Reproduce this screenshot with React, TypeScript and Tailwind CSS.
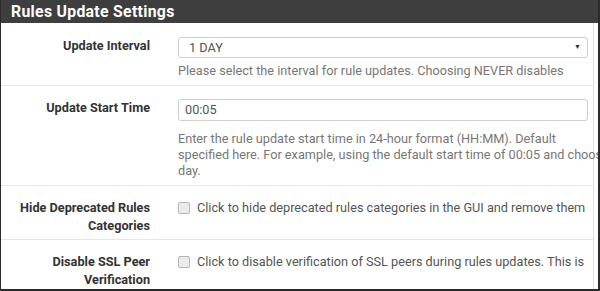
export default function App() {
  return (
    <div
      className="w-[600px] h-[291px] overflow-hidden bg-white border-l border-r-2 border-b-2 border-[#2b2b2b]"
      style={{ fontFamily: 'Roboto, "Liberation Sans", sans-serif' }}
    >
      <div className="h-[23px] bg-[#3e3e3e] pl-[10px] flex items-center">
        <span className="text-white text-[15.8px] font-bold tracking-[0.3px]">Rules Update Settings</span>
      </div>
      <div className="mr-[4px] border-r border-[#e3e3e3]">
        {/* Update Interval */}
        <div className="flex border-b border-[#e6e6e6] h-[63px]">
          <div className="w-[149px] shrink-0 text-right pt-[15px] text-[12.7px] font-bold text-[#333] leading-[16px]">
            Update Interval
          </div>
          <div className="flex-1 ml-[28px] pr-[5px] pt-[14px] min-w-0">
            <div className="h-[21px] border border-[#cfcfcf] rounded-[3px] flex items-center justify-between pl-[10px] pr-[6px] text-[12.7px] text-[#555]">
              <span>1 DAY</span>
              <span className="text-[7px] text-[#333]">▼</span>
            </div>
            <div className="mt-[5px] text-[12.7px] leading-[16px] text-[#777] whitespace-nowrap">
              Please select the interval for rule updates. Choosing NEVER disables
            </div>
          </div>
        </div>
        {/* Update Start Time */}
        <div className="flex border-b border-[#e6e6e6] h-[100px]">
          <div className="w-[149px] shrink-0 text-right pt-[14px] text-[12.7px] font-bold text-[#333] leading-[16px]">
            Update Start Time
          </div>
          <div className="flex-1 ml-[28px] pr-[5px] pt-[13px] min-w-0">
            <div className="h-[22px] border border-[#cfcfcf] rounded-[3px] flex items-center pl-[6px] text-[12.7px] text-[#555]">
              00:05
            </div>
            <div className="mt-[10px] text-[12.7px] leading-[16px] text-[#777] whitespace-nowrap">
              Enter the rule update start time in 24-hour format (HH:MM). Default
              <br />
              specified here. For example, using the default start time of 00:05 and choos
              <br />
              day.
            </div>
          </div>
        </div>
        {/* Hide Deprecated Rules Categories */}
        <div className="flex border-b border-[#e6e6e6] h-[54px]">
          <div className="w-[149px] shrink-0 text-right pt-[13px] text-[12.7px] font-bold text-[#333] leading-[18px]">
            Hide Deprecated Rules
            <br />
            Categories
          </div>
          <div className="flex-1 ml-[28px] pr-[5px] pt-[14px] min-w-0 flex items-start gap-[7px] text-[12.7px] leading-[16px] text-[#555] whitespace-nowrap">
            <span className="mt-[2px] w-[12px] h-[12px] shrink-0 rounded-[2px] border border-[#b5b5b5] bg-[#ececec]" />
            <span>Click to hide deprecated rules categories in the GUI and remove them</span>
          </div>
        </div>
        {/* Disable SSL Peer Verification */}
        <div className="flex h-[60px]">
          <div className="w-[149px] shrink-0 text-right pt-[13px] text-[12.7px] font-bold text-[#333] leading-[18px]">
            Disable SSL Peer
            <br />
            Verification
          </div>
          <div className="flex-1 ml-[28px] pr-[5px] pt-[14px] min-w-0 flex items-start gap-[7px] text-[12.7px] leading-[16px] text-[#555] whitespace-nowrap">
            <span className="mt-[2px] w-[12px] h-[12px] shrink-0 rounded-[2px] border border-[#b5b5b5] bg-[#ececec]" />
            <span>Click to disable verification of SSL peers during rules updates. This is</span>
          </div>
        </div>
      </div>
    </div>
  )
}
